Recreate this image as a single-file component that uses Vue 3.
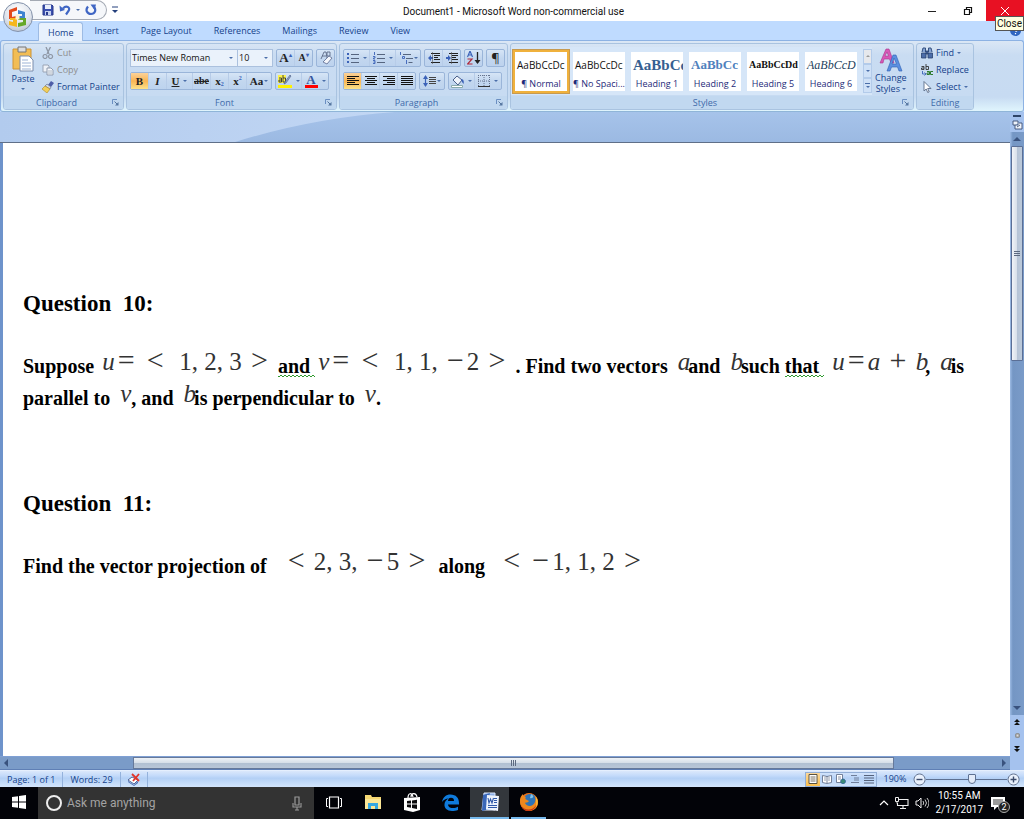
<template>
  <div class="word-app">
    <!-- title bar -->
    <header class="title-bar">
      <button class="office-btn" aria-label="Office Button"><Icon name="office" :w="24" :h="24" /></button>
      <div class="quick-access">
        <button aria-label="Save"><Icon name="save" :w="12" :h="12" /></button>
        <button aria-label="Undo"><Icon name="undo" :w="12" :h="12" /></button>
        <i class="caret"></i>
        <button aria-label="Repeat"><Icon name="repeat" :w="12" :h="12" /></button>
      </div>
      <button class="qat-more" aria-label="Customize"><Icon name="more" :w="6" :h="8" /></button>
      <div class="doc-title">Document1 - Microsoft Word non-commercial use</div>
      <div class="window-btns">
        <button aria-label="Minimize"><Icon name="minimize" :w="10" :h="10" /></button>
        <button aria-label="Restore"><Icon name="restore" :w="10" :h="10" /></button>
        <button class="close" aria-label="Close window"><Icon name="close" :w="10" :h="10" /></button>
      </div>
      <span class="tooltip">Close</span>
    </header>

    <!-- ribbon tabs -->
    <nav class="tabs">
      <button v-for="tab in tabs" :key="tab" :class="{ active: tab === activeTab }" @click="activeTab = tab">{{ tab }}</button>
      <button class="help-btn" aria-label="Help"><Icon name="help" :w="11" :h="11" /></button>
    </nav>

    <!-- ribbon -->
    <section class="ribbon">
      <div class="group clipboard">
        <div class="group-body">
          <button class="paste">
            <Icon name="paste" :w="22" :h="26" />
            <span>Paste</span>
            <i class="caret"></i>
          </button>
          <div class="stack">
            <button class="off"><Icon name="cut" :w="12" :h="12" />Cut</button>
            <button class="off"><Icon name="copy" :w="12" :h="12" />Copy</button>
            <button><Icon name="painter" :w="12" :h="12" />Format Painter</button>
          </div>
        </div>
        <div class="group-name">Clipboard<Icon class="launcher" name="launcher" :w="7" :h="7" /></div>
      </div>

      <div class="group font">
        <div class="group-body rows">
          <div class="row">
            <div class="combos">
              <label class="combo name"><select v-model="fontName" aria-label="Font"><option>Times New Roman</option></select><i class="caret"></i></label>
              <label class="combo size"><select v-model="fontSize" aria-label="Font Size"><option>10</option></select><i class="caret"></i></label>
            </div>
            <div class="btns">
              <button class="serif grow">A<sup>▴</sup></button>
              <button class="serif shrink">A<sup>▾</sup></button>
            </div>
            <div class="btns"><button aria-label="Clear Formatting"><Icon name="clear" :w="14" :h="14" /></button></div>
          </div>
          <div class="row">
            <div class="btns">
              <button class="serif on">B</button>
              <button class="serif"><em>I</em></button>
              <button class="serif wide"><u>U</u><i class="caret"></i></button>
              <button class="serif small"><s>abe</s></button>
              <button class="serif">x<sub>2</sub></button>
              <button class="serif">x<sup>2</sup></button>
              <button class="serif mid">Aa<i class="caret"></i></button>
            </div>
            <div class="btns">
              <button class="wide" aria-label="Highlight"><Icon name="highlight" :w="14" :h="14" /><i class="caret"></i></button>
              <button class="wide serif color"><span>A</span><i class="caret"></i></button>
            </div>
          </div>
        </div>
        <div class="group-name">Font<Icon class="launcher" name="launcher" :w="7" :h="7" /></div>
      </div>

      <div class="group paragraph">
        <div class="group-body rows">
          <div class="row">
            <div class="btns">
              <button class="wide" aria-label="Bullets"><Icon name="bullets" :w="12" :h="12" /><i class="caret"></i></button>
              <button class="wide" aria-label="Numbering"><Icon name="numbering" :w="12" :h="12" /><i class="caret"></i></button>
              <button class="mid" aria-label="Multilevel List"><Icon name="multilevel" :w="14" :h="12" /><i class="caret"></i></button>
            </div>
            <div class="btns">
              <button aria-label="Decrease Indent"><Icon name="outdent" :w="12" :h="12" /></button>
              <button aria-label="Increase Indent"><Icon name="indent" :w="12" :h="12" /></button>
            </div>
            <div class="btns"><button aria-label="Sort"><Icon name="sort" :w="14" :h="14" /></button></div>
            <div class="btns"><button class="pilcrow">¶</button></div>
          </div>
          <div class="row">
            <div class="btns">
              <button class="on" aria-label="Align Left"><Icon name="left" :w="12" :h="12" /></button>
              <button aria-label="Center"><Icon name="center" :w="12" :h="12" /></button>
              <button aria-label="Align Right"><Icon name="right" :w="12" :h="12" /></button>
              <button aria-label="Justify"><Icon name="justify" :w="12" :h="12" /></button>
            </div>
            <div class="btns"><button class="mid" aria-label="Line Spacing"><Icon name="spacing" :w="13" :h="12" /><i class="caret"></i></button></div>
            <div class="btns">
              <button class="wide" aria-label="Shading"><Icon name="shading" :w="13" :h="13" /><i class="caret"></i></button>
              <button class="wide" aria-label="Borders"><Icon name="borders" :w="12" :h="12" /><i class="caret"></i></button>
            </div>
          </div>
        </div>
        <div class="group-name">Paragraph<Icon class="launcher" name="launcher" :w="7" :h="7" /></div>
      </div>

      <div class="group styles">
        <div class="group-body">
          <div class="gallery">
            <button v-for="s in styles" :key="s.label" class="style-card" :class="[s.kind, { picked: s.label === '¶ Normal' }]">
              <span class="sample">{{ s.sample }}</span>
              <span class="label">{{ s.label }}</span>
            </button>
            <div class="gallery-scroll">
              <button class="dim" aria-label="Row up"><i class="caret up"></i></button>
              <button aria-label="Row down"><i class="caret"></i></button>
              <button aria-label="More styles"><i class="bar"></i><i class="caret"></i></button>
            </div>
          </div>
          <button class="change-styles">
            <Icon name="changeStyles" :w="24" :h="24" />
            <span>Change</span>
            <span>Styles<i class="caret"></i></span>
          </button>
        </div>
        <div class="group-name">Styles<Icon class="launcher" name="launcher" :w="7" :h="7" /></div>
      </div>

      <div class="group editing">
        <div class="group-body">
          <div class="stack">
            <button><Icon name="find" :w="12" :h="12" />Find<i class="caret"></i></button>
            <button><Icon name="replace" :w="12" :h="12" />Replace</button>
            <button><Icon name="select" :w="12" :h="12" />Select<i class="caret"></i></button>
          </div>
        </div>
        <div class="group-name">Editing</div>
      </div>
    </section>

    <!-- document -->
    <section class="workspace">
      <div class="doc-column">
        <svg class="band" viewBox="0 0 1010 30" preserveAspectRatio="none">
          <defs>
            <linearGradient id="bandDark" x1="0" y1="0" x2="0" y2="1"><stop offset="0" stop-color="#a6c3ea" /><stop offset="1" stop-color="#9bb9e2" /></linearGradient>
            <linearGradient id="bandLight" x1="0" y1="0" x2="1" y2="0"><stop offset="0" stop-color="#b2cbee" /><stop offset="1" stop-color="#c2d7f4" /></linearGradient>
          </defs>
          <path d="M0 0H1010V30H0z" fill="url(#bandDark)" />
          <path d="M0 0H395Q310 6 232 30H0z" fill="url(#bandLight)" />
          <path d="M0 29.500H1010" stroke="#5f6f88" />
        </svg>
        <article class="page">
          <h2>Question&nbsp; 10:</h2>
          <p>Suppose <span class="math eq"><i>u</i><b>=</b> <b>&lt;</b>&nbsp; 1, 2, 3 <b>&gt;</b></span>&nbsp; <span class="squiggle">and&nbsp;</span><span class="math eq"><i>v</i><b>=</b> <b>&lt;</b>&nbsp; 1, 1, <b>−</b>2 <b>&gt;</b></span>&nbsp; . Find two vectors&nbsp; <span class="math tight"><i>a</i></span>and&nbsp; <span class="math tight"><i>b</i></span>such <span class="squiggle">that&nbsp;</span> <span class="math eq"><i>u</i><b>=</b><i>a</i> <b>+</b> <i>b</i></span>,&nbsp; <span class="math tight"><i>a</i></span>is<br />parallel to&nbsp; <span class="math"><i>v</i></span>, and&nbsp; <span class="math tight"><i>b</i></span>is perpendicular to&nbsp; <span class="math"><i>v</i></span>.</p>
          <h2>Question&nbsp; 11:</h2>
          <p>Find the vector projection of&nbsp;&nbsp; <span class="math lead"><b>&lt;</b> 2, 3, <b>−</b>5 <b>&gt;</b></span>&nbsp; along&nbsp;&nbsp; <span class="math"><b>&lt;</b> <b>−</b>1, 1, 2 <b>&gt;</b></span></p>
        </article>
        <div class="hscroll">
          <i class="arrow left"></i>
          <div class="before"></div>
          <div class="thumb"><i></i><i></i><i></i></div>
          <div class="after"></div>
          <i class="arrow right"></i>
        </div>
      </div>
      <div class="vscroll">
        <div class="split"></div>
        <div class="ruler-btn"><Icon name="ruler" :w="11" :h="10" /></div>
        <div class="track">
          <div class="arrow-box"><i class="arrow up"></i></div>
          <div class="thumb"><i></i><i></i><i></i></div>
          <div class="rest"></div>
          <div class="arrow-box"><i class="arrow down"></i></div>
        </div>
        <div class="browse">
          <Icon name="dblUp" :w="6" :h="6" />
          <span class="ball"></span>
          <Icon name="dblDown" :w="6" :h="6" />
        </div>
      </div>
    </section>

    <!-- status bar -->
    <footer class="status">
      <span class="cell">Page: 1 of 1</span>
      <span class="cell">Words: 29</span>
      <span class="cell"><Icon name="proof" :w="14" :h="13" /></span>
      <div class="views">
        <button class="on" aria-label="Print Layout"><Icon name="vPrint" :w="10" :h="10" /></button>
        <button aria-label="Full Screen Reading"><Icon name="vRead" :w="10" :h="10" /></button>
        <button aria-label="Web Layout"><Icon name="vWeb" :w="10" :h="10" /></button>
        <button aria-label="Outline"><Icon name="vOutline" :w="10" :h="10" /></button>
        <button aria-label="Draft"><Icon name="vDraft" :w="10" :h="10" /></button>
      </div>
      <span class="zoom-value">190%</span>
      <button class="round" aria-label="Zoom out"><Icon name="minus" :w="13" :h="13" /></button>
      <input v-model="zoom" class="zoom" type="range" min="0" max="100" aria-label="Zoom" />
      <button class="round" aria-label="Zoom in"><Icon name="plus" :w="13" :h="13" /></button>
    </footer>

    <!-- windows taskbar -->
    <footer class="taskbar">
      <button class="start" aria-label="Start"><Icon name="windows" :w="14" :h="14" /></button>
      <label class="search">
        <span class="cortana"></span>
        <input type="text" placeholder="Ask me anything" />
        <Icon name="mic" :w="10" :h="15" />
      </label>
      <button aria-label="Task View"><Icon name="taskview" :w="16" :h="13" /></button>
      <button aria-label="File Explorer"><Icon name="folder" :w="18" :h="16" /></button>
      <button aria-label="Store"><Icon name="store" :w="18" :h="20" /></button>
      <button aria-label="Edge"><Icon name="edge" :w="17" :h="17" /></button>
      <button class="open" aria-label="Word"><Icon name="word" :w="20" :h="20" /></button>
      <button class="running" aria-label="Firefox"><Icon name="firefox" :w="20" :h="20" /></button>
      <div class="tray">
        <Icon name="chevron" :w="10" :h="10" />
        <Icon name="network" :w="14" :h="12" />
        <Icon name="volume" :w="14" :h="12" />
        <div class="clock"><span>10:55 AM</span><span>2/17/2017</span></div>
        <div class="notify"><Icon name="note" :w="14" :h="13" /><span>2</span></div>
      </div>
    </footer>
  </div>
</template>

<script setup>
import { h, ref } from 'vue'

const tabs = ['Home', 'Insert', 'Page Layout', 'References', 'Mailings', 'Review', 'View']
const activeTab = ref('Home')
const fontName = ref('Times New Roman')
const fontSize = ref('10')
const zoom = ref(58)

const styles = [
  { sample: 'AaBbCcDc', label: '¶ Normal', kind: 'plain' },
  { sample: 'AaBbCcDc', label: '¶ No Spaci...', kind: 'plain' },
  { sample: 'AaBbCc', label: 'Heading 1', kind: 'h-one' },
  { sample: 'AaBbCc', label: 'Heading 2', kind: 'h-two' },
  { sample: 'AaBbCcDd', label: 'Heading 5', kind: 'h-five' },
  { sample: 'AaBbCcD', label: 'Heading 6', kind: 'h-six' }
]

// name: [viewBox, [path, fill, stroke, strokeWidth, dash], ...]
const icons = {
  office: ['0 0 24 24',
    ['M3 5l8-3v3.500L6 7v5l4-1v3H3z', '#e3491a'], ['M12 5l7 2v7h-6v-3h3V9h-4z', '#3f83cf'],
    ['M4 13h7v9l-8-2v-4l4 1v-2H4z', '#f6b71d'], ['M12 13h8v7l-8 2v-4l5-1v-2h-5z', '#66a829'],
    ['M9.500 9.500h4v5h-4z', '#fff3d0']],
  help: ['0 0 11 11', ['M5.500 0a5.500 5.500 0 1 0 .1 0z', '#2f65c0'], ['M3.500 4q0-2 2-2t2 2-2 2.500M5.500 8v1.300', 'none', '#fff', 1.2]],
  save: ['0 0 12 12', ['M1 1h9l1 1v9H1z', '#3a4fae', '#26388c'], ['M3 1h6v4H3z', '#e8eefb'], ['M3 7h6v4H3z', '#c6d2f0'], ['M4 8h2v3H4z', '#26388c']],
  undo: ['0 0 12 12', ['M4 4.500C7 1 12 3 9.500 7L7 10.500', 'none', '#3f66c4', 2.2], ['M0.500 1.500l.5 6 5-1.500z', '#3f66c4']],
  repeat: ['0 0 12 12', ['M3 2.500C0 6 2 10 6 10S11.500 6 9 3', 'none', '#3f66c4', 2.2], ['M5.500 0.500H11L9.500 6z', '#3f66c4']],
  more: ['0 0 6 8', ['M0 1h6', 'none', '#24407c'], ['M0 4h6L3 7z', '#24407c']],
  minimize: ['0 0 10 10', ['M1 5.500h8', 'none', '#222', 1]],
  restore: ['0 0 10 10', ['M1.500 3.500h5v5h-5zM3.500 3V1.500h5v5H7', 'none', '#111', 1.2]],
  close: ['0 0 10 10', ['M1 1l8 8M9 1L1 9', 'none', '#fff', 1]],
  paste: ['0 0 22 26',
    ['M1 3h18v20H1z', '#f2bd55', '#cf9434'], ['M6 1h8v5H6z', '#ddd', '#777'],
    ['M8 10h9l4 4v11H8z', '#fff', '#7a8cab'], ['M10 14h6M10 17h9M10 20h9M10 23h9', 'none', '#9db3d6']],
  cut: ['0 0 12 12', ['M4 0l3 7M8.500 0L5 7', 'none', '#8e97a5', 1.3], ['M3 7.500a2 2 0 1 0 .1 0zM8.500 7.500a2 2 0 1 0 .1 0z', 'none', '#8e97a5', 1.2]],
  copy: ['0 0 12 12', ['M1 1h5l1 1v6H1z', '#eef2f8', '#9aa4b5'], ['M5 4h4l2 2v5H5z', '#f5f8fc', '#8f9aad'], ['M6 7h4M6 9h4', 'none', '#9aa4b5', 0.8]],
  painter: ['0 0 12 12', ['M9 0l3 2-3 4-3-2z', '#4d5da8'], ['M5 3l4 3-1 2-5-3z', '#cfd7e6', '#5b6786', 0.6], ['M3 5l5 3-3 4-5-4z', '#f2cf5a', '#b08a22', 0.6]],
  launcher: ['0 0 7 7', ['M0.500 5V0.500H5', 'none', '#6b8fc2'], ['M2.500 2.500l3 3', 'none', '#54759f'], ['M6.500 3v3.500H3z', '#54759f']],
  clear: ['0 0 14 14', ['M2 8L5 1h2l1 6M3 5h4M8 1h3v4H8z', 'none', '#5d6b88', 0.9], ['M4 11l6-6 3 2-5 6z', '#f4f6fb', '#68769a', 0.9]],
  highlight: ['0 0 14 14', ['M0 1h8v8H0z', '#fbf24a'], ['M1 4h2.500v4H1V6h2.500M5 1v7h2.500V4H5', 'none', '#333', 0.9], ['M12 1l1 1-5 7-2 1 1-2z', '#8fa3c8', '#4a5a80', 0.6], ['M0 11h14v3H0z', '#fff200']],
  bullets: ['0 0 12 12', ['M0 1h2v2H0zM0 5h2v2H0zM0 9h2v2H0z', '#3b62b8'], ['M4 2.500h8M4 6.500h8M4 10.500h8', 'none', '#56657f']],
  numbering: ['0 0 12 12', ['M1.500 0v3M0 4.500h2v1.500H0.500v1H2M0 8.500h2v3H0M0.500 10H2', 'none', '#3b62b8', 0.9], ['M4 2.500h8M4 6.500h8M4 10.500h8', 'none', '#56657f']],
  multilevel: ['0 0 14 12', ['M1.500 0v3M3.500 4.500h2v2h-2zM7.500 8v4', 'none', '#3b62b8', 0.9], ['M4 2.500h8M7 6.500h7M9.500 10.500h4', 'none', '#56657f']],
  outdent: ['0 0 12 12', ['M3 1.500h9M6 3.500h6M6 5.500h4M6 7.500h6M3 10.500h9', 'none', '#222', 1.2], ['M0 6l3-3v2h2v2H3v2z', '#3b62b8'], ['M4.500 0v12', 'none', '#555', 0.6]],
  indent: ['0 0 12 12', ['M3 1.500h9M6 3.500h6M6 5.500h4M6 7.500h6M3 10.500h9', 'none', '#222', 1.2], ['M5 6L2 3v2H0v2h2v2z', '#3b62b8'], ['M5.500 0v12', 'none', '#555', 0.6]],
  sort: ['0 0 14 14', ['M0.500 6L3 0l2.500 6M1.500 4h3', 'none', '#3b62b8', 1.2], ['M0.500 8h4.500l-4.500 5h5', 'none', '#b02a3c', 1.2], ['M10.500 1v11', 'none', '#222', 1.3], ['M7.500 9h6l-3 4z', '#222']],
  left: ['0 0 12 12', ['M0 1.500h12M0 3.500h8M0 5.500h12M0 7.500h8M0 9.500h12', 'none', '#111']],
  center: ['0 0 12 12', ['M0 1.500h12M2 3.500h8M0 5.500h12M2 7.500h8M0 9.500h12', 'none', '#111']],
  right: ['0 0 12 12', ['M0 1.500h12M4 3.500h8M0 5.500h12M4 7.500h8M0 9.500h12', 'none', '#111']],
  justify: ['0 0 12 12', ['M0 1.500h12M0 3.500h12M0 5.500h12M0 7.500h12M0 9.500h12', 'none', '#111']],
  spacing: ['0 0 13 12', ['M2.500 1v10', 'none', '#3b62b8', 1.2], ['M0 4l2.500-4L5 4zM0 8l2.500 4L5 8z', '#3b62b8'], ['M6 2.500h7M6 4.500h7M6 6.500h7M6 8.500h7', 'none', '#444']],
  shading: ['0 0 13 13', ['M2 5l4-4 5 4-4 5z', '#eef3fb', '#4a5f88'], ['M10 4c3 0 3 3 2.500 5L11 7z', '#3b62b8'], ['M0.500 10.500h11v2H.5z', '#fff', '#8aa']],
  borders: ['0 0 12 12', ['M0.500 0v11M6 0v11M11.500 0v11M0 0.500h12M0 6h12', 'none', '#66748f', 1, '1 1'], ['M0 11.500h12', 'none', '#333']],
  changeStyles: ['0 0 24 24', ['M1 15L7 1h3l5 14h-3l-1.500-4H5L4 15zM6 8h3.500L8 4z', '#d858b8', '#a8358c', 0.6], ['M8 23l6-16h3l6 16h-3l-1.500-4h-6L11 23zM13 16h4.500L15 10z', '#5b8fe0', '#2d5fb4', 0.6]],
  find: ['0 0 12 12', ['M1 5l1-4h2.500v4M7.500 5V1H10l1 4', '#86a4d4', '#34507f'], ['M0.500 6h4.500v5H.5zM7 6h4.500v5H7zM5 4h2v3H5z', '#4c6da8', '#29426f', 0.8]],
  replace: ['0 0 12 12', ['M0.500 2.500h2.500v3H.5V4H3M5 0v5.500h2.500v-3H5', 'none', '#333', 0.9], ['M1.500 7v3h3M3.500 8.500L5 10l-1.500 1.500', 'none', '#3b62b8', 0.9], ['M6 7.500h2.500v3H6V9h2.500M12 7.500h-2.500v3H12', 'none', '#2c7a2c', 1]],
  select: ['0 0 12 12', ['M3 0.500v9.500l2.200-2 1.500 3.500 1.500-.7L6.700 7.500H10z', '#fff', '#5a6b88', 0.9]],
  ruler: ['0 0 11 10', ['M1 1h5v4H1zM3 5v4h7V3H7M5 7l3-2', '#eef3fb', '#3d4f73', 0.9]],
  dblUp: ['0 0 6 6', ['M3 0l3 3H0zM3 3l3 3H0z', '#111']],
  dblDown: ['0 0 6 6', ['M3 6l3-3H0zM3 3l3-3H0z', '#111']],
  proof: ['0 0 14 13', ['M1 7l4-3 6 3-4 4z', '#fff', '#51669a'], ['M1 8l6 4 4-4v2l-4 3-6-4z', '#4d6fb4'], ['M5 1l7 7M12 1L6 8', 'none', '#e0352b', 1.8]],
  vPrint: ['0 0 10 10', ['M1 .5h8v9H1z', '#fff', '#5a5240'], ['M2.500 3h5M2.500 5h5M2.500 7h5', 'none', '#6b6350', 0.9]],
  vRead: ['0 0 10 10', ['M0.500 1.500l4.500 1 4.500-1v7L5 9.500l-4.500-1zM5 2v7', '#fff', '#66748f', 0.9], ['M2 4h2M2 6h2M6 4h2M6 6h2', 'none', '#66748f', 0.7]],
  vWeb: ['0 0 10 10', ['M0.500.5h6v8h-6z', '#fff', '#66748f', 0.9], ['M2 3h3M2 5h3', 'none', '#66748f', 0.8], ['M7 5a2.400 2.400 0 1 0 .1 0z', '#3b8a78', '#2c5f9a', 0.8]],
  vOutline: ['0 0 10 10', ['M1 1.500h6M4 4h5M4 6h5M1 8.500h8', 'none', '#66748f', 0.9]],
  vDraft: ['0 0 10 10', ['M0 1.500h10M0 4h10M0 6.500h10M0 9h10', 'none', '#56637c']],
  minus: ['0 0 13 13', ['M6.500 1a5.500 5.500 0 1 0 .1 0z', '#e9f1fd', '#62728f'], ['M3.500 6.500h6', 'none', '#3c4c6c', 1.4]],
  plus: ['0 0 13 13', ['M6.500 1a5.500 5.500 0 1 0 .1 0z', '#e9f1fd', '#62728f'], ['M3.500 6.500h6M6.500 3.500v6', 'none', '#3c4c6c', 1.4]],
  windows: ['0 0 14 14', ['M0 2l6-.8v5.300H0zM7 1.100L14 0v6.500H7zM0 7.500h6v5.300L0 12zM7 7.500h7V14l-7-1z', '#fff']],
  mic: ['0 0 10 15', ['M3 1h4v8H3z', 'none', '#999', 1.2], ['M1 7v4h8V7M5 11v3M3 14h4', 'none', '#999', 1.1]],
  taskview: ['0 0 16 13', ['M3.500 1h9v11h-9z', 'none', '#fff', 1.2], ['M2 2.500H.5v8H2M14 2.500h1.500v8H14', 'none', '#fff']],
  folder: ['0 0 18 16', ['M1 1h6l1 2h9v12H1z', '#f5d873'], ['M1 5h16v10H1z', '#fbe695'], ['M4 9h10v6h-3v-3H7v3H4z', '#35a7e0']],
  store: ['0 0 18 20', ['M5 6C5 1 9 0 10 5M8 5c0-4 5-5 6 0', 'none', '#fff', 1.2], ['M1 6l16-1v13l-7 2-9-2z', '#fff'], ['M4 9l4-.5v3H4zM9 8.400l5-.6v3.700H9zM4 12.500h4v3.200L4 15zM9 12.500h5V17l-5-1z', '#0a0a0c']],
  edge: ['0 0 17 17', ['M0 8C1 3 4 .5 8.500.5 14 .5 17 4 17 9v1.500H6c.3 3 3 3.500 5 3.500 2 0 3.500-.5 5-1.300V16c-2 .8-4 1-6 1-5 0-8-3-7.500-7 .2-2.500 2-4.500 4-5.500C4 4.500 1.500 6 0 8zm6-1h6c0-2-1-3.200-3-3.200S6.300 5 6 7z', '#0f7bdc']],
  word: ['0 0 20 20', ['M4 1h11v17H2z', '#8eb0e6', '#dce8fb'], ['M3 3l7-2-4 17-4 1z', '#3a67b8'], ['M7 3l12 1-1 15-12-2z', '#eef4fd'], ['M8 6l1 5 1.500-4 1.500 4 1.500-5M14 6.500h3M14 8.500h3M14 10.500h3M8 13.500h9M8 15.500h9', 'none', '#2f58a8', 1.1]],
  firefox: ['0 0 20 20', ['M10 1a9 9 0 1 0 .1 0z', '#e8711a'], ['M11 2a7 7 0 1 0 .1 0z', '#2e74b8'], ['M12 2c4 2 2 5-1 4z', '#7ec3ea'], ['M1 8c0-3 2-5 3-6 0 2 1 2 3 3-1 1-1 2 1 3l2 1c-1 2-3 1-4 2 2 4 8 4 10-1 1-3 0-5-1-7 5 4 5 9 2 13-5 5-16 4-16-8z', '#f0881d'], ['M2 13c3 6 12 6 15 0-1 5-5 6-8 6s-6-2-7-6z', '#c93a12'], ['M17 5c2 3 2 7 0 10 1-4 0-7 0-10z', '#fbd23c']],
  chevron: ['0 0 10 10', ['M1 7l4-4 4 4', 'none', '#fff', 1.2]],
  network: ['0 0 14 12', ['M4 2.500h9v6H2.500V6M8 8.500v3M5 11.500h6', 'none', '#eee', 1.1], ['M0.500.5h3v4h-3zM2 4.500v2', 'none', '#eee']],
  volume: ['0 0 14 12', ['M1 4h2l3-3v10L3 8H1z', 'none', '#eee'], ['M8 4q1.500 2 0 4M10 2.500q3 3.500 0 7M12 1q4 5 0 10', 'none', '#ddd', 0.9]],
  note: ['0 0 14 13', ['M0 0h14v10H6l-3 3v-3H0z', '#fff'], ['M2 3h10M2 5h10M2 7h10', 'none', '#222', 0.9]]
}

const Icon = (props) => {
  const [viewBox, ...shapes] = icons[props.name]
  return h('svg', { width: props.w, height: props.h, viewBox, 'aria-hidden': 'true' },
    shapes.map(([d, fill, stroke, width, dash]) => h('path', {
      d, fill, stroke: stroke || 'none', 'stroke-width': width || 1, 'stroke-dasharray': dash
    })))
}
Icon.props = ['name', 'w', 'h']
</script>

<style>
body {
  margin: 0;
}
</style>

<style scoped>
.word-app {
  display: flex;
  flex-direction: column;
  min-height: 100vh;
  font: 9px/12px "Open Sans", "Noto Sans", sans-serif;
  color: #15428b;
  background: #bfdbff;
  overflow: hidden;
}

.word-app * {
  box-sizing: border-box;
}

button,
select,
input {
  margin: 0;
  padding: 0;
  border: 0;
  background: none;
  font: inherit;
  color: inherit;
}

svg {
  flex: none;
  display: block;
}

.caret {
  flex: none;
  display: inline-block;
  border: 2px solid transparent;
  border-top: 2px solid #4a6ea9;
  border-bottom: 0;
}

.caret.up {
  border-top: 0;
  border-bottom: 2px solid #999;
}

/* title bar */
.title-bar {
  position: relative;
  display: flex;
  height: 21px;
  background: #fff;
  font-family: Roboto, sans-serif;
  font-size: 10px;
}

.office-btn {
  position: absolute;
  z-index: 2;
  left: 3px;
  top: 2px;
  width: 30px;
  height: 30px;
  display: flex;
  align-items: center;
  justify-content: center;
  border: 1px solid #8492aa;
  border-radius: 50%;
  background: radial-gradient(circle at 50% 30%, #fff, #dfe4ec 55%, #aab5c7);
}

.quick-access {
  display: flex;
  align-items: center;
  gap: 5px;
  width: 77px;
  height: 20px;
  margin-left: 30px;
  padding-left: 12px;
  border: 1px solid #a3a9b3;
  border-left: 0;
  border-radius: 0 10px 10px 0;
  background: #f5f7fa;
}

.qat-more {
  margin-left: 5px;
  height: 19px;
}

.doc-title {
  flex: 1;
  padding-right: 5px;
  line-height: 23px;
  text-align: center;
  color: #111;
}

.window-btns {
  display: flex;
}

.window-btns button {
  display: flex;
  align-items: center;
  justify-content: center;
  width: 36px;
}

.window-btns .close {
  width: 38px;
  background: #e81123;
}

.tooltip {
  position: absolute;
  z-index: 3;
  right: 0;
  top: 16px;
  padding: 0 1px;
  border: 1px solid #555;
  background: #ffffe1;
  line-height: 13px;
  color: #111;
}

/* tabs */
.tabs {
  display: flex;
  height: 19px;
  padding-left: 38px;
}

.tabs button {
  padding: 0 11px;
  line-height: 20px;
}

.tabs .active {
  padding: 0 9px;
  margin: 1px 0 -1px;
  border: 1px solid #9dbbe4;
  border-bottom: 0;
  border-radius: 3px 3px 0 0;
  background: #e8f1fd;
  line-height: 17px;
  z-index: 1;
}

.tabs .help-btn {
  margin: 4px 3px 0 auto;
  padding: 0;
  width: 11px;
  height: 11px;
}

/* ribbon */
.ribbon {
  display: flex;
  gap: 2px;
  height: 72px;
  padding: 2px 2px 1px;
  border: 1px solid #8db2e3;
  border-bottom-color: #8fb5d8;
  border-radius: 3px;
  background: linear-gradient(#dbe7f5, #c9dcf2 20%, #c7dbf2 80%, #e0f5fd);
}

.group {
  display: flex;
  flex-direction: column;
  flex: none;
  border: 1px solid #a9c3e0;
  border-radius: 3px;
  overflow: hidden;
}

.clipboard { width: 121px; }
.font { width: 211px; }
.paragraph { width: 169px; }
.styles { width: 404px; }
.editing { width: 58px; }

.group-body {
  flex: 1;
  display: flex;
  min-height: 0;
}

.group-name {
  position: relative;
  height: 13px;
  line-height: 13px;
  padding-right: 14px;
  text-align: center;
  background: #c1d8f0;
  color: #3e6aaa;
}

.editing .group-name {
  padding-right: 0;
}

.launcher {
  position: absolute;
  right: 4px;
  top: 3px;
}

.paste {
  display: flex;
  flex-direction: column;
  align-items: center;
  width: 38px;
  padding-top: 2px;
}

.paste span {
  margin: 1px 0 3px;
}

.stack {
  display: flex;
  flex-direction: column;
  white-space: nowrap;
}

.stack button {
  display: flex;
  align-items: center;
  gap: 3px;
  height: 18px;
}

.stack .off {
  color: #8d8d8d;
}

.editing .stack {
  padding-left: 4px;
}

.rows {
  flex-direction: column;
  gap: 5px;
  padding: 5px 3px 0;
}

.row {
  display: flex;
  gap: 3px;
}

.combos {
  display: flex;
  width: 143px;
}

.combo {
  display: flex;
  align-items: center;
  height: 18px;
  border: 1px solid #abc1de;
  background: #eaf2fb;
}

.combo.name { width: 108px; }
.combo.size { width: 35px; border-left: 0; }

.combo select {
  flex: 1;
  min-width: 0;
  padding-left: 1px;
  appearance: none;
  color: #111;
}

.combo .caret {
  margin-right: 4px;
}

.btns {
  display: flex;
  height: 18px;
  border: 1px solid #9ab5d9;
  border-radius: 2px;
  background: linear-gradient(#d6e5f6, #c3d7ef 50%, #bdd3ee);
}

.btns button {
  display: flex;
  align-items: center;
  justify-content: center;
  gap: 4px;
  width: 18px;
  border-right: 1px solid #b7cce8;
}

.btns button:last-child {
  border-right: 0;
  width: 17px;
}

.btns button.wide { width: 26px; }
.btns button.mid { width: 24px; gap: 1px; }

.btns .on {
  background: linear-gradient(#fbd29a, #f9b554 50%, #fde28a);
}

.btns .serif {
  font-family: "Liberation Serif", serif;
  font-weight: bold;
  font-size: 11px;
  color: #222;
}

.btns .grow,
.btns .color {
  font-size: 13px;
}

.btns .shrink,
.btns .small {
  font-size: 10px;
}

.serif sup,
.serif sub {
  font-size: 6px;
  line-height: 6px;
  color: #3b62b8;
}

.btns button:has(sub),
.btns button:has(sup) {
  gap: 0;
}

.serif sup { align-self: flex-start; margin-top: 2px; }
.serif sub { align-self: flex-end; margin-bottom: 2px; }

.color span {
  width: 13px;
  height: 14px;
  border-bottom: 3px solid #f00;
  line-height: 12px;
  color: #35549c;
}

.btns .pilcrow {
  font-size: 13px;
  color: #222;
}

/* style gallery */
.styles .group-body {
  gap: 3px;
}

.gallery {
  display: flex;
  align-items: center;
  gap: 6px;
  width: 361px;
  height: 48px;
  margin-top: 3px;
  padding-left: 4px;
  background: #d6e6f8;
}

.style-card {
  display: flex;
  flex-direction: column;
  align-items: center;
  flex: none;
  width: 52px;
  height: 39px;
  background: #fff;
  color: #1e2a78;
  white-space: nowrap;
  overflow: hidden;
}

.style-card.picked {
  outline: 2px solid #f0b13c;
  box-shadow: 0 0 0 3px #c79a50;
}

.sample {
  align-self: flex-start;
  height: 26px;
  padding-left: 2px;
  line-height: 26px;
  color: #111;
}

.plain .sample { font-size: 10px; }
.h-one .sample { font: bold 15px/26px "Liberation Serif", serif; color: #365f91; }
.h-two .sample { font: bold 13px/26px "Liberation Serif", serif; color: #4f81bd; }
.h-five .sample { font: bold 10px/26px "Liberation Serif", serif; }
.h-six .sample { font: italic 12px/26px "Liberation Serif", serif; color: #243f60; }

.gallery-scroll {
  display: flex;
  flex-direction: column;
  width: 11px;
  height: 44px;
}

.gallery-scroll button {
  flex: 1;
  display: flex;
  flex-direction: column;
  align-items: center;
  justify-content: center;
  gap: 2px;
  border: 1px solid #b3cbea;
  background: #cfe1f7;
}

.gallery-scroll .dim {
  background: #e6e8ec;
}

.bar {
  width: 5px;
  height: 1px;
  background: #4a6ea9;
}

.change-styles {
  display: flex;
  flex-direction: column;
  align-items: center;
  padding-top: 4px;
  line-height: 11px;
}

.change-styles span {
  display: flex;
  align-items: center;
  gap: 2px;
}

/* workspace */
.workspace {
  flex: 1;
  display: flex;
  background: #a5c2ee;
}

.doc-column {
  flex: 1;
  display: flex;
  flex-direction: column;
  min-width: 0;
}

.band {
  width: 100%;
  height: 31px;
}

.page {
  flex: 1;
  padding: 145px 20px 0;
  border-left: 3px solid #6e93cb;
  background: #fff;
  font-family: "Liberation Serif", "Times New Roman", serif;
  font-weight: bold;
  color: #000;
}

.page h2 {
  margin: 0 0 30px;
  font-size: 23px;
  line-height: 32px;
}

.page p {
  margin: 0 0 74px;
  font-size: 20px;
  line-height: 32px;
  white-space: nowrap;
}

.math {
  font-size: 25px;
  font-weight: normal;
  line-height: 20px;
  vertical-align: 3px;
  color: #333;
}

.math b {
  margin: 0 3px;
  font-size: 30px;
  font-weight: normal;
  line-height: 20px;
}

.math.eq {
  margin: 0 -3px 0 3px;
}

.math.lead {
  margin-left: 3px;
}

.math.tight {
  margin-right: -2px;
}

.squiggle {
  background:
    linear-gradient(90deg, #2f9a2f 50%, transparent 50%) 0 100% / 4px 1px repeat-x,
    linear-gradient(90deg, transparent 50%, #2f9a2f 50%) 0 calc(100% - 1px) / 4px 1px repeat-x;
}

.hscroll {
  display: flex;
  align-items: stretch;
  height: 14px;
  border-top: 1px solid #7fa0d4;
  border-bottom: 1px solid #5f7fb5;
  background: #7a9bc8;
}

.arrow {
  align-self: center;
  margin: 0 4px;
  border: 4px solid transparent;
}

.arrow.left { border-right-color: #39527e; border-left: 0; }
.arrow.right { border-left-color: #39527e; border-right: 0; }
.arrow.up { border-bottom-color: #39527e; border-top: 0; }
.arrow.down { border-top-color: #39527e; border-bottom: 0; }

.hscroll .before { flex: 121; }
.hscroll .after { flex: 104; }

.hscroll .thumb {
  flex: 760;
  display: flex;
  align-items: center;
  justify-content: center;
  gap: 1px;
  border: 1px solid #66799a;
  background: linear-gradient(#eef2f6, #d5dee8 50%, #b1c0d2 55%, #b9c7d8);
}

.hscroll .thumb i {
  width: 1px;
  height: 6px;
  background: #5d6a80;
}

.vscroll {
  display: flex;
  flex-direction: column;
  align-items: center;
  width: 14px;
  padding-top: 3px;
}

.split {
  width: 8px;
  height: 2px;
  background: #2e4468;
}

.ruler-btn {
  height: 15px;
  padding-top: 3px;
}

.track {
  flex: 1;
  display: flex;
  flex-direction: column;
  width: 100%;
  background: linear-gradient(90deg, #9dbbe4, #7496c4 20%, #7a9bc8);
}

.arrow-box {
  display: flex;
  justify-content: center;
  height: 14px;
}

.vscroll .thumb {
  flex: 215;
  display: flex;
  flex-direction: column;
  align-items: center;
  justify-content: center;
  gap: 1px;
  margin: 0 1px;
  border: 1px solid #5b6f96;
  border-radius: 1px;
  background: linear-gradient(90deg, #f1f4f8, #d7dfe9 50%, #b6c4d6 55%, #bccadb);
}

.vscroll .thumb i {
  width: 6px;
  height: 1px;
  background: #5d6a80;
}

.vscroll .rest {
  flex: 342;
}

.browse {
  display: flex;
  flex-direction: column;
  align-items: center;
  gap: 8px;
  height: 55px;
  padding-top: 4px;
}

.ball {
  width: 5px;
  height: 5px;
  border-radius: 50%;
  background: radial-gradient(#ddd, #555);
}

/* status bar */
.status {
  display: flex;
  align-items: center;
  height: 17px;
  padding-right: 4px;
  border-top: 1px solid #e5effd;
  background: linear-gradient(#dbe8fb, #c3dafa 30%, #b3d0f5 45%, #d3e5fc);
}

.cell {
  height: 15px;
  padding: 0 7px;
  border-right: 1px solid #94b2dc;
  line-height: 15px;
}

.cell:nth-child(3) {
  padding: 1px 6px;
}

.views {
  display: flex;
  height: 15px;
  margin-left: auto;
  border: 1px solid #92aed6;
}

.views button {
  display: flex;
  align-items: center;
  justify-content: center;
  width: 14px;
}

.views .on {
  background: linear-gradient(#fbd89c, #fbc04f);
}

.zoom-value {
  width: 36px;
  text-align: center;
}

.round {
  width: 13px;
  height: 13px;
}

.zoom {
  width: 81px;
  height: 13px;
  appearance: none;
  background: linear-gradient(#5e7192, #5e7192) center / 100% 1px no-repeat;
}

.zoom::-webkit-slider-thumb {
  appearance: none;
  width: 8px;
  height: 10px;
  border: 1px solid #5e7192;
  border-radius: 1px 1px 4px 4px;
  background: #e3ebf8;
}

/* taskbar */
.taskbar {
  display: flex;
  height: 32px;
  background: #020308;
  color: #fff;
  font-family: Roboto, sans-serif;
  font-size: 10px;
}

.taskbar > button {
  display: flex;
  align-items: center;
  justify-content: center;
  width: 39px;
  border-bottom: 2px solid transparent;
}

.taskbar .start {
  width: 38px;
}

.taskbar .open {
  background: #33373c;
  border-color: #76b9ed;
}

.taskbar .running {
  border-image: linear-gradient(90deg, transparent 10%, #76b9ed 10%, #76b9ed 90%, transparent 90%) 2;
}

.search {
  display: flex;
  align-items: center;
  width: 276px;
  padding: 0 12px 0 8px;
  background: #333;
}

.search input {
  flex: 1;
  min-width: 0;
  padding-left: 5px;
  font-size: 12px;
}

.search input::placeholder {
  color: #a3a3a3;
  opacity: 1;
}

.cortana {
  width: 16px;
  height: 16px;
  border: 2px solid #eee;
  border-radius: 50%;
}

.tray {
  display: flex;
  align-items: center;
  gap: 6px;
  margin-left: auto;
  padding-right: 3px;
}

.clock {
  display: flex;
  flex-direction: column;
  align-items: center;
  line-height: 14px;
}

.notify {
  position: relative;
  width: 30px;
  margin-left: 2px;
}

.notify span {
  position: absolute;
  left: 7px;
  top: 4px;
  width: 12px;
  height: 12px;
  border: 1px solid #aaa;
  border-radius: 50%;
  background: #222;
  font-size: 9px;
  line-height: 10px;
  text-align: center;
}
</style>
